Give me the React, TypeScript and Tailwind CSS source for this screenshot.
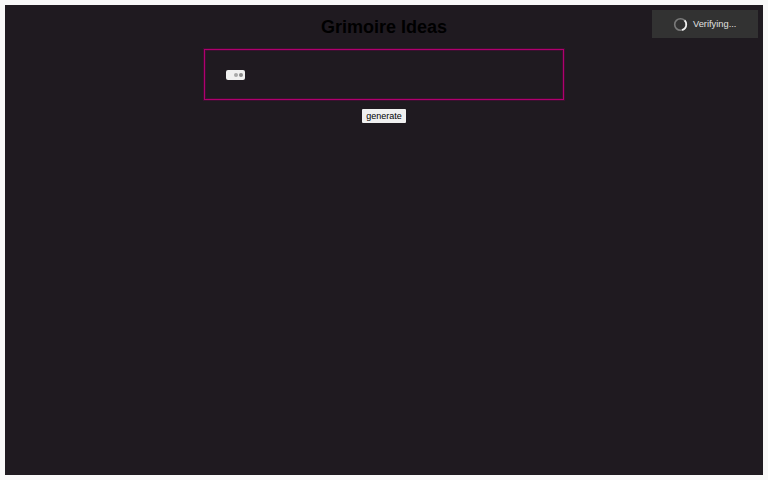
export default function App() {
  return (
    <div className="relative h-[480px] w-[768px] overflow-hidden bg-[#f8f8f8] font-['Liberation_Sans',Arial,sans-serif] p-[5px]">
      <main className="flex h-[470px] flex-col items-center bg-[#1f1a20]">
        <h1 className="mt-[10px] h-[24px] text-[18px] font-bold leading-[24px] text-black">Grimoire Ideas</h1>
        <section className="mt-[10px] flex h-[51px] w-[360px] items-center border border-solid border-[#b0006e] pl-[21px] shadow-[0_0_0_1px_#3c1030,inset_0_0_0_1px_#3c1030]">
          <span className="flex h-[10px] w-[19px] items-center justify-end gap-[1px] rounded-[2px] bg-[#f0f0f0] pr-[2px]">
            <span className="h-[4px] w-[4px] rounded-full bg-[#a8a8a8]" />
            <span className="h-[4px] w-[4px] rounded-full bg-[#8a8a8a]" />
          </span>
        </section>
        <button className="mt-[9px] h-[14px] w-[44px] rounded-[1px] bg-[#f0f0f0] text-center text-[9px] leading-[14px] text-black">generate</button>
      </main>
      <div className="absolute right-[10px] top-[10px] flex h-[28px] w-[106px] items-center gap-[5px] bg-[#323232] pl-[21px]">
        <svg width="15" height="15" viewBox="0 0 15 15" fill="none" className="shrink-0">
          <circle cx="7.5" cy="7.5" r="5.8" stroke="#7a7a7a" strokeWidth="1.6" />
          <path d="M11.6 3.4A5.8 5.8 0 0 1 9 13.1" stroke="#f0f0f0" strokeWidth="1.6" />
        </svg>
        <span className="text-[9.3px] leading-[14px] text-[#e0e0e0]">Verifying...</span>
      </div>
    </div>
  );
}
